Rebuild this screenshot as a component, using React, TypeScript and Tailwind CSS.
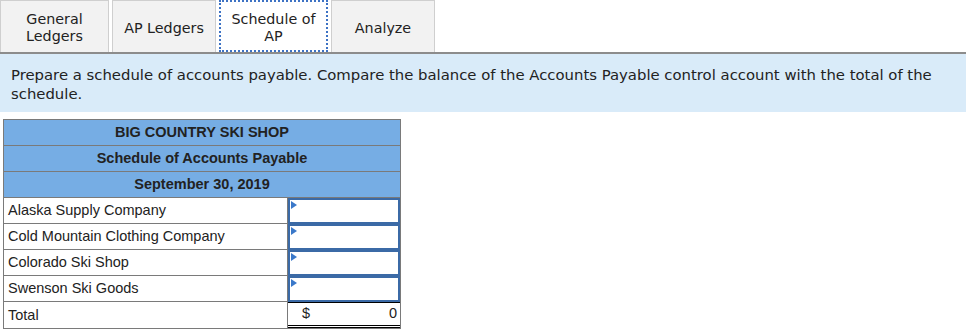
import React from "react"

const tabs = [
  { label: "General\nLedgers", active: false, w: "w-[109px]" },
  { label: "AP Ledgers", active: false, w: "w-[104px]" },
  { label: "Schedule of\nAP", active: true, w: "w-[109px]" },
  { label: "Analyze", active: false, w: "w-[104px]" },
]

const vendors = [
  "Alaska Supply Company",
  "Cold Mountain Clothing Company",
  "Colorado Ski Shop",
  "Swenson Ski Goods",
]

function Marker() {
  return (
    <svg className="absolute left-[1px] top-[1px]" width="6" height="8" viewBox="0 0 6 8">
      <polygon points="0,0 6,4 0,8" fill="#3a78c9" />
    </svg>
  )
}

export default function App() {
  return (
    <div className="w-[979px] h-[334px] bg-white overflow-hidden">
      {/* Tabs */}
      <div className="flex gap-[3px] w-[966px] h-[54px] border-b-2 border-[#8c8c8c]">
        {tabs.map((t) => (
          <div
            key={t.label}
            className={`${t.w} h-[52px] flex items-center justify-center text-center whitespace-pre-line leading-[17px] text-[14.3px] text-[#222] font-['DejaVu_Sans',sans-serif] pt-[3px] ${
              t.active
                ? "bg-white border-2 border-dotted border-[#3d72c4]"
                : "bg-[#f2f2f2] border border-[#cfcfcf] border-b-0"
            }`}
          >
            {t.label}
          </div>
        ))}
      </div>

      {/* Instructions */}
      <div className="w-[966px] h-[58px] bg-[#d9ebf9] px-[11px] pt-[12px] text-[14.85px] leading-[19px] text-[#222] font-['DejaVu_Sans',sans-serif]">
        Prepare a schedule of accounts payable. Compare the balance of the Accounts Payable control account with the total of the schedule.
      </div>

      {/* Schedule table */}
      <div className="mt-[7px] ml-[3px] w-[398px] border border-[#7a7a7a] font-['Liberation_Sans',Arial,sans-serif] text-[14.5px] text-[#222]">
        {["BIG COUNTRY SKI SHOP", "Schedule of Accounts Payable", "September 30, 2019"].map((h) => (
          <div
            key={h}
            className="h-[26px] pt-[1px] flex items-center justify-center bg-[#76ade4] border-b border-[#7a7a7a] font-bold"
          >
            {h}
          </div>
        ))}
        {vendors.map((v) => (
          <div key={v} className="flex h-[26px] border-b border-[#7a7a7a]">
            <div className="w-[284px] px-[4px] pt-[1px] flex items-center border-r border-[#7a7a7a]">{v}</div>
            <div className="flex-1 relative border-2 border-[#3b6aa6] -mb-[1px]">
              <Marker />
            </div>
          </div>
        ))}
        <div className="flex h-[26px]">
          <div className="w-[284px] px-[4px] pt-[1px] flex items-center border-r border-[#7a7a7a]">Total</div>
          <div className="flex-1 flex items-center justify-between pl-[14px] pr-[3px] border-t border-black border-b-[3px] border-b-black [border-bottom-style:double]">
            <span>$</span>
            <span>0</span>
          </div>
        </div>
      </div>
    </div>
  )
}
